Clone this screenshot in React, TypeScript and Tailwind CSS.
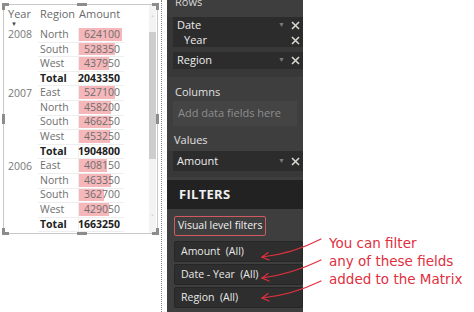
import React from 'react'

type Row = { year?: string; region: string; amount: number; total?: boolean }

const MAX = 624100

const ROWS: Row[] = [
  { year: '2008', region: 'North', amount: 624100 },
  { region: 'South', amount: 528350 },
  { region: 'West', amount: 437950 },
  { region: 'Total', amount: 2043350, total: true },
  { year: '2007', region: 'East', amount: 527100 },
  { region: 'North', amount: 458200 },
  { region: 'South', amount: 466250 },
  { region: 'West', amount: 453250 },
  { region: 'Total', amount: 1904800, total: true },
  { year: '2006', region: 'East', amount: 408150 },
  { region: 'North', amount: 463350 },
  { region: 'South', amount: 362700 },
  { region: 'West', amount: 429050 },
  { region: 'Total', amount: 1663250, total: true },
]

const font = { fontFamily: '"Open Sans", "Noto Sans", sans-serif' }

function Handle({ className }: { className: string }) {
  return <div className={`absolute bg-[#8c8c8c] ${className}`} />
}

function Chevron() {
  return <span className="text-[7px] text-[#7a7a7a] mr-[6px]">▼</span>
}

function CloseX() {
  return (
    <svg width="9" height="9" viewBox="0 0 9 9" className="shrink-0">
      <path d="M1 1 L8 8 M8 1 L1 8" stroke="#d8d8d0" strokeWidth="1.6" />
    </svg>
  )
}

function Matrix() {
  return (
    <div className="relative mt-[4px] ml-[3px] w-[155px] h-[230px] border border-[#c9c9c9] bg-white flex">
      {/* selection handles */}
      <Handle className="left-[-2px] top-[-2px] w-[7px] h-[3px]" />
      <Handle className="left-[-2px] top-[-2px] w-[3px] h-[7px]" />
      <Handle className="right-[-2px] top-[-2px] w-[7px] h-[3px]" />
      <Handle className="right-[-2px] top-[-2px] w-[3px] h-[7px]" />
      <Handle className="left-[-2px] bottom-[-2px] w-[7px] h-[3px]" />
      <Handle className="left-[-2px] bottom-[-2px] w-[3px] h-[7px]" />
      <Handle className="right-[-2px] bottom-[-2px] w-[7px] h-[3px]" />
      <Handle className="right-[-2px] bottom-[-2px] w-[3px] h-[7px]" />
      <Handle className="left-[73px] top-[-2px] w-[10px] h-[3px]" />
      <Handle className="left-[73px] bottom-[-2px] w-[10px] h-[3px]" />
      <Handle className="left-[-2px] top-[109px] w-[3px] h-[10px]" />
      <Handle className="right-[-2px] top-[109px] w-[3px] h-[10px]" />

      <div className="flex-1 text-[10.5px] text-[#666]" style={font}>
        <div className="flex h-[23px] items-start pt-[2px] text-[11px] text-[#6a6a6a]">
          <div className="w-[34px] pl-[4px] flex flex-col">
            <span className="leading-[14px]">Year</span>
            <span className="pl-[3px] text-[6px] leading-[6px] text-[#444]">▼</span>
          </div>
          <div className="w-[40px] pl-[2px] leading-[14px]">Region</div>
          <div className="w-[46px] pl-[1px] leading-[14px]">Amount</div>
        </div>
        {ROWS.map((r, i) => (
          <div key={i} className="flex h-[14.6px] items-center">
            <div className="w-[34px] pl-[4px] text-[#777]">{r.year ?? ''}</div>
            <div
              className={`w-[40px] h-full flex items-center pl-[2px] border-b border-[#eeeeee] ${
                r.total ? 'font-bold text-[#222]' : 'text-[#6e6e6e]'
              }`}
            >
              {r.region}
            </div>
            <div className="relative w-[46px] h-full flex items-center justify-end pr-[4px] border-b border-l border-[#eeeeee]">
              {!r.total && (
                <div
                  className="absolute left-0 top-0 bottom-[1px] bg-[#f6b7ba]"
                  style={{ width: `${(r.amount / MAX) * 43}px` }}
                />
              )}
              <span className={`relative ${r.total ? 'font-bold text-[#222]' : 'text-[#6e6e6e]'}`}>
                {r.amount}
              </span>
            </div>
          </div>
        ))}
      </div>

      {/* scrollbar */}
      <div className="w-[7px] mr-[1px] flex flex-col items-center bg-[#f3f3f3]">
        <span className="text-[7px] leading-none text-[#888] mt-[10px]">˄</span>
        <div className="w-[7px] h-[127px] bg-[#cdcdcd] mt-[10px]" />
        <div className="flex-1" />
        <span className="text-[7px] leading-none text-[#888] mb-[12px]">˅</span>
      </div>
    </div>
  )
}

function Item({ label, indent }: { label: string; indent?: boolean }) {
  return (
    <div className={`flex-1 flex items-center h-[15px] ${indent ? 'pl-[11px]' : 'pl-[4px]'}`}>
      {label}
    </div>
  )
}

function FieldsPanel() {
  return (
    <div className="w-[136px] shrink-0 h-[312px] bg-[#3e3e3e] text-[#ececec] text-[11px] overflow-hidden" style={font}>
      <div className="mt-[-6px] h-[23px] pl-[8px] text-[#d8d8d8]">Rows</div>

      <div className="bg-[#383838] pl-[6px] pb-[8px]">
        <div className="bg-[#2c2c2c] h-[30px] pt-[2px] flex flex-col justify-center">
          <div className="flex items-center">
            <Item label="Date" />
            <Chevron />
            <CloseX />
            <div className="w-[3px]" />
          </div>
          <div className="flex items-center">
            <Item label="Year" indent />
            <CloseX />
            <div className="w-[3px]" />
          </div>
        </div>
        <div className="bg-[#2c2c2c] h-[17px] mt-[5px] flex items-center">
          <Item label="Region" />
          <Chevron />
          <CloseX />
          <div className="w-[3px]" />
        </div>
      </div>

      <div className="h-[22px] pl-[8px] pt-[7px] text-[#e0e0e0]">Columns</div>
      <div className="mx-[6px] mt-[2px] h-[25px] bg-[#444444] flex items-center pl-[5px] text-[#8e8e8e]">
        Add data fields here
      </div>
      <div className="h-[18px] pl-[7px] pt-[6px] text-[#e0e0e0]">Values</div>

      <div className="mt-[7px] bg-[#383838] pl-[6px] pb-[6px]">
        <div className="bg-[#2c2c2c] h-[20px] flex items-center">
          <Item label="Amount" />
          <Chevron />
          <CloseX />
          <div className="w-[3px]" />
        </div>
      </div>

      <div className="mt-[3px] h-[29px] bg-[#222222] flex items-center pl-[12px] text-[13px] font-bold tracking-[0.3px] text-[#f0f0f0]">
        FILTERS
      </div>

      <div className="pl-[7px] pt-[7px]">
        <div className="inline-flex h-[20px] items-center px-[3px] border border-[#d05a60] rounded-[2px] text-[10.5px] text-[#f0f0f0]">
          Visual level filters
        </div>
        <div className="mt-[5px] flex flex-col gap-[2px]">
          {['Amount  (All)', 'Date - Year  (All)', 'Region  (All)'].map((t) => (
            <div
              key={t}
              className="h-[21px] bg-[#2e2e2e] border border-[#262626] rounded-[2px] flex items-center pl-[6px] text-[10.5px] text-[#e8e8e8] whitespace-pre"
            >
              {t}
            </div>
          ))}
        </div>
      </div>
    </div>
  )
}

export default function App() {
  return (
    <div className="relative w-[474px] h-[312px] bg-white flex overflow-hidden">
      <div className="w-[161px] shrink-0">
        <Matrix />
      </div>
      <div className="w-0 h-full border-l border-dotted border-[#8a8a8a]" />
      <div className="w-[5px] shrink-0" />
      <FieldsPanel />

      <div
        className="pl-[26px] pt-[234px] text-[13.5px] leading-[18px] text-[#e0303e] whitespace-nowrap"
        style={{ fontFamily: '"DejaVu Sans", sans-serif' }}
      >
        <div>You can filter</div>
        <div>any of these fields</div>
        <div>added to the Matrix</div>
      </div>

      {/* annotation arrows */}
      <svg className="absolute inset-0 pointer-events-none" width="474" height="312">
        <g stroke="#e0303e" strokeWidth="1.2" fill="none" strokeLinecap="round">
          <path d="M321 239 Q 292 254 262 257" />
          <path d="M268 252.5 L262 257 L269 260" />
          <path d="M321 260 Q 292 274 262 278" />
          <path d="M268 273.5 L262 278 L269 281" />
          <path d="M321 281 Q 292 295 262 298" />
          <path d="M268 293.5 L262 298 L269 301" />
        </g>
      </svg>
    </div>
  )
}
